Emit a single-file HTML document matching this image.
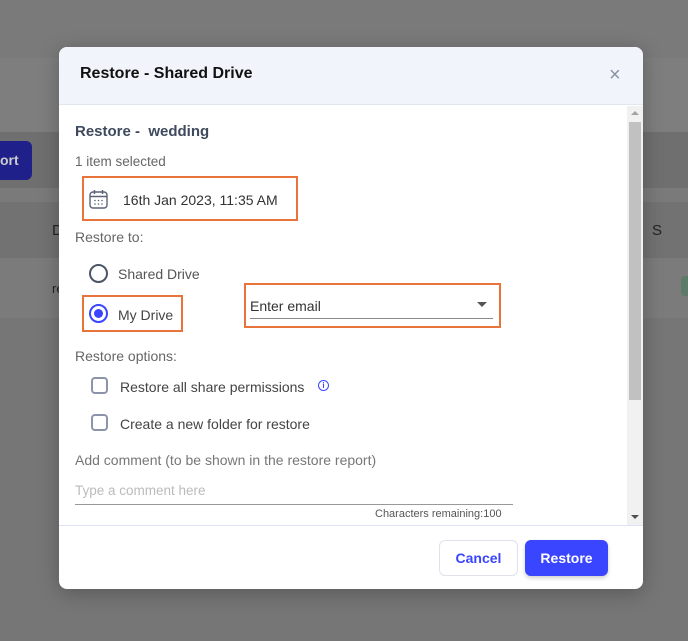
<!DOCTYPE html>
<html><head><style>
*{box-sizing:border-box;margin:0;padding:0}
body{width:688px;height:641px;overflow:hidden;background:#767676;font-family:"Liberation Sans",Arial,sans-serif;position:relative}
.bg{position:absolute;left:0;width:688px}
.m{position:absolute;left:59px;top:47px;width:584px;height:542px;background:#fff;border-radius:8px;overflow:hidden;box-shadow:0 4px 20px rgba(0,0,0,.25)}
.hd{height:58px;background:#f1f4fa;border-bottom:1px solid #e2e6ee;position:relative}
.hd h1{position:absolute;left:21px;top:18px;font-size:16px;font-weight:bold;color:#111}
.ab{position:absolute;font-size:14px;color:#444;white-space:nowrap}
.gr{color:#666}
.ob{position:absolute;border:2px solid #e8743b}
.rd{position:absolute;width:19px;height:19px;border-radius:50%;border:2px solid #4b5563}
.cb{position:absolute;width:17px;height:17px;border-radius:4px;border:2px solid #8b94a8}
</style></head><body>
<div class="bg" style="top:0;height:58px;background:#7a7a7a"></div>
<div class="bg" style="top:58px;height:74px;background:#7e7e7e"></div>
<div class="bg" style="top:132px;height:56px;background:#6f6f6f"></div>
<div class="bg" style="top:188px;height:14px;background:#7a7a7a"></div>
<div class="bg" style="top:202px;height:56px;background:#727272"></div>
<div class="bg" style="top:258px;height:60px;background:#7b7b7b"></div>
<div style="position:absolute;left:-10px;top:141px;width:42px;height:39px;background:#20208a;border-radius:6px;color:#ccc;font-weight:bold;font-size:14px;padding:11px 0 0 10px">ort</div>
<div style="position:absolute;left:52px;top:222px;font-size:15px;color:#222">D</div>
<div style="position:absolute;left:52px;top:281px;font-size:13px;color:#222">re</div>
<div style="position:absolute;left:652px;top:222px;font-size:15px;color:#222">S</div>
<div style="position:absolute;left:681px;top:276px;width:14px;height:20px;background:#5d7a6a;border-radius:4px"></div>
<div class="m">
<div class="hd"><h1>Restore - Shared Drive</h1>
<div style="position:absolute;left:550px;top:18px;font-size:20px;color:#8a93a6;line-height:20px">×</div></div>
<div class="ab" style="left:16px;top:76px;font-size:15px;font-weight:bold;color:#3f4a5e">Restore -&nbsp; wedding</div>
<div class="ab gr" style="left:16px;top:107px;font-size:13.5px">1 item selected</div>
<div class="ob" style="left:23px;top:129px;width:216px;height:45px"></div>
<svg style="position:absolute;left:30px;top:142px" width="19" height="20" viewBox="0 0 19 20" fill="none" stroke="#5a6478" stroke-width="1.4"><rect x="1" y="3" width="17" height="16" rx="3"/><path d="M1 7.5h17M5.5 1v4M13.5 1v4"/><g fill="#5a6478" stroke="none"><circle cx="6" cy="11.5" r=".8"/><circle cx="9.5" cy="11.5" r=".8"/><circle cx="13" cy="11.5" r=".8"/><circle cx="6" cy="15" r=".8"/><circle cx="9.5" cy="15" r=".8"/><circle cx="13" cy="15" r=".8"/></g></svg>
<div class="ab" style="left:64px;top:145px;font-size:14px;color:#333">16th Jan 2023, 11:35 AM</div>
<div class="ab gr" style="left:16px;top:182px">Restore to:</div>
<div class="rd" style="left:30px;top:217px"></div>
<div class="ab gr" style="left:59px;top:219px;color:#555">Shared Drive</div>
<div class="ob" style="left:23px;top:248px;width:101px;height:37px"></div>
<div class="rd" style="left:30px;top:257px;border-color:#3a45ff;padding:3px"><div style="width:9px;height:9px;border-radius:50%;background:#3a45ff"></div></div>
<div class="ab" style="left:59px;top:260px;color:#444">My Drive</div>
<div class="ob" style="left:185px;top:236px;width:257px;height:45px"></div>
<div class="ab" style="left:191px;top:251px;color:#333">Enter email</div>
<div style="position:absolute;left:191px;top:271px;width:243px;height:1px;background:#888"></div>
<div style="position:absolute;left:418px;top:255px;border:5px solid transparent;border-top-color:#555;border-bottom:0"></div>
<div class="ab gr" style="left:16px;top:301px">Restore options:</div>
<div class="cb" style="left:32px;top:330px"></div>
<div class="ab" style="left:61px;top:332px;color:#444">Restore all share permissions</div>
<div style="position:absolute;left:259px;top:333px;width:11px;height:11px;border:1.3px solid #3a45ff;border-radius:50%;color:#3a45ff;font-size:8px;text-align:center;line-height:9px;font-weight:bold">i</div>
<div class="cb" style="left:32px;top:367px"></div>
<div class="ab" style="left:61px;top:369px;color:#444">Create a new folder for restore</div>
<div class="ab gr" style="left:16px;top:405px;color:#777">Add comment (to be shown in the restore report)</div>
<div class="ab" style="left:16px;top:436px;font-size:13.5px;color:#bbb">Type a comment here</div>
<div style="position:absolute;left:16px;top:457px;width:438px;height:1px;background:#999"></div>
<div class="ab" style="left:316px;top:461px;font-size:11px;color:#555">Characters remaining:100</div>
<div style="position:absolute;left:568px;top:59px;width:16px;height:419px;background:#f1f1f1"></div>
<div style="position:absolute;left:570px;top:75px;width:12px;height:278px;background:#c1c1c1"></div>
<div style="position:absolute;left:572px;top:64px;border:4px solid transparent;border-bottom-color:#a3a3a3;border-top:0"></div>
<div style="position:absolute;left:572px;top:468px;border:4px solid transparent;border-top-color:#505050;border-bottom:0"></div>
<div style="position:absolute;left:0;top:478px;width:584px;height:1px;background:#dde3f4"></div>
<div style="position:absolute;left:380px;top:493px;width:79px;height:36px;border:1px solid #dfe2ea;border-radius:6px;color:#3a45ff;font-size:14px;font-weight:bold;text-align:center;line-height:34px">Cancel</div>
<div style="position:absolute;left:466px;top:493px;width:83px;height:36px;background:#3a45ff;border-radius:6px;color:#fff;font-size:14px;font-weight:bold;text-align:center;line-height:36px;box-shadow:0 2px 4px rgba(0,0,0,.2)">Restore</div>
</div>
</body></html>
